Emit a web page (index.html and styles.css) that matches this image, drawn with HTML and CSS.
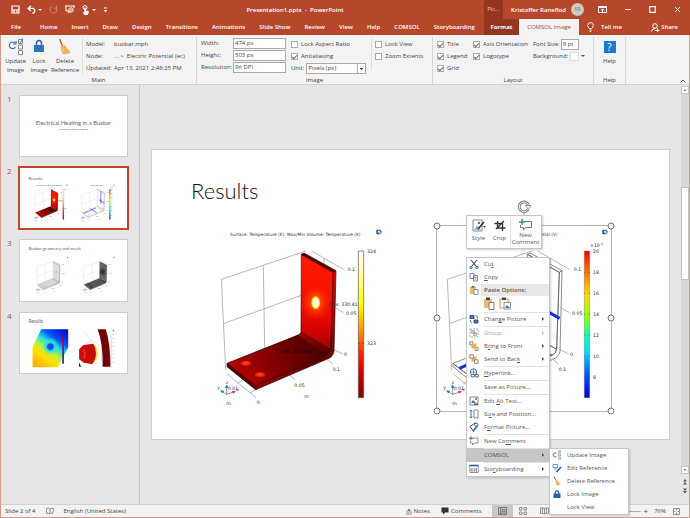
FILE: index.html
```html
<!DOCTYPE html>
<html lang="en">
<head>
    <meta charset="UTF-8">
    <meta name="viewport" content="width=device-width, initial-scale=1.0">
    <title>Presentation1.pptx - PowerPoint</title>
    <link rel="stylesheet" href="styles.css">
</head>
<body>
    <header class="titlebar">
        <div class="quick">
            <button aria-label="Save"><svg width="9" height="9" viewBox="0 0 9 9"><path d="M1 1h7v7H1zM1 5h7M3 5v3M6 5v3" fill="none" stroke="#fff" stroke-width="1.2"/></svg></button>
            <button aria-label="Undo" class="with-caret"><svg width="9" height="9" viewBox="0 0 9 9"><path d="M4 .8 1.2 3.4 4 6M1.5 3.4h4q2.3.3 2.3 2.3T5.4 8.2" fill="none" stroke="#fff" stroke-width="1.4"/></svg><i class="caret"></i></button>
            <button aria-label="Redo" class="off"><svg width="9" height="9" viewBox="0 0 9 9"><path d="M3 1.5a3.4 3.4 0 1 0 4 1M7.5.5v2.7H5" fill="none" stroke="#d7866f" stroke-width="1"/></svg></button>
            <button aria-label="From beginning"><svg width="10" height="9" viewBox="0 0 10 9"><path d="M0 1h10M1 1v5h3M9 1v2M3 8.500l2-2.500" fill="none" stroke="#fff"/><circle cx="6" cy="5" r="2.200" fill="none" stroke="#fff"/><path d="M5.500 4v2l2-1z" fill="#fff"/></svg></button>
            <button aria-label="Touch mode" class="with-caret"><svg width="8" height="10" viewBox="0 0 8 10"><circle cx="3" cy="2.500" r="2" fill="none" stroke="#fff"/><path d="M2.300 2.500h1.400v2.800l3 .7v2L5.500 10h-3L.5 7l1.800.3z" fill="#fff"/></svg><i class="caret"></i></button>
            <button aria-label="Customize"><svg width="5" height="6" viewBox="0 0 5 6"><path d="M1 1h3" stroke="#fff"/><path d="M.5 3h4l-2 2.200z" fill="#fff"/></svg></button>
        </div>
        <div class="doc-title">Presentation1.pptx&nbsp; -&nbsp; PowerPoint</div>
        <div class="account">
            <span class="context-head">Pic...</span>
            <span class="user">Kristoffer Raneflod</span>
            <span class="avatar">KR</span>
            <div class="window-buttons">
                <button aria-label="Ribbon display"><svg width="9" height="7" viewBox="0 0 9 7"><path d="M.5.500h8v6h-8z" fill="none" stroke="#fff"/><path d="M.5 1.500h8M4.500 6V3M3 4.400l1.500-1.500L6 4.400" fill="none" stroke="#fff"/></svg></button>
                <button aria-label="Minimize"><svg width="7" height="7" viewBox="0 0 7 7"><path d="M0 3.500h6" stroke="#fff"/></svg></button>
                <button aria-label="Maximize"><svg width="7" height="7" viewBox="0 0 7 7"><path d="M.7.700h5.600v5.600H.7z" fill="none" stroke="#fff" stroke-width="1.200"/></svg></button>
                <button aria-label="Close"><svg width="7" height="7" viewBox="0 0 7 7"><path d="m1 1 5 5M6 1 1 6" stroke="#fff"/></svg></button>
            </div>
        </div>
    </header>

    <div class="tabbar">
        <nav class="tabs">
            <a href="#">File</a>
            <a href="#">Home</a>
            <a href="#">Insert</a>
            <a href="#">Draw</a>
            <a href="#">Design</a>
            <a href="#">Transitions</a>
            <a href="#">Animations</a>
            <a href="#">Slide Show</a>
            <a href="#">Review</a>
            <a href="#">View</a>
            <a href="#">Help</a>
            <a href="#">COMSOL</a>
            <a href="#">Storyboarding</a>
        </nav>
        <div class="tabs-right">
            <a href="#" class="tab-context">Format</a>
            <a href="#" class="tab-active">COMSOL Image</a>
            <a href="#" class="tell"><svg width="7" height="10" viewBox="0 0 7 10"><path d="M2.300 6.500Q.7 5 .7 3.400a2.800 2.800 0 0 1 5.600 0Q6.300 5 4.700 6.500zM2.300 8h2.400M2.700 9.400h1.600" fill="none" stroke="#fff" stroke-width=".9"/></svg>Tell me</a>
            <a href="#" class="share"><svg width="9" height="9" viewBox="0 0 9 9"><circle cx="4" cy="3" r="2.300" fill="none" stroke="#fff"/><path d="M.5 8.500Q1 5.500 4 5.500M4 7.500h4.500M6.500 5.500v3.500" fill="none" stroke="#fff"/></svg>Share</a>
        </div>
    </div>

    <div class="frame">
        <section class="ribbon">
            <div class="group">
                <div class="group-body">
                    <button class="big update"><svg width="16" height="17" viewBox="0 0 16 17"><path d="M7 5A3.300 3.300 0 1 0 7.500 9M8 3v3H5" fill="none" stroke="#3a78b8" stroke-width="1.200"/><path d="M10.500 1.500h4v4h-4zM10.500 7h4v4h-4zM10.500 12.500h4v4h-4z" fill="#fff" stroke="#888"/><path d="m11.500 3.500 1 1 2.500-4" fill="none" stroke="#3a78b8"/></svg>Update<br>Image</button>
                    <button class="big lock"><svg width="12" height="17" viewBox="0 0 12 17"><path d="M3.500 8V5.500a2.500 3 0 0 1 5 0V8" fill="none" stroke="#2d62a0" stroke-width="1.500"/><path d="M1 7h10v7H1z" fill="#2f75b5"/></svg>Lock<br>Image</button>
                    <button class="big delete"><svg width="14" height="17" viewBox="0 0 14 17"><path d="m1.500 1 3 7" stroke="#a56a35" stroke-width="1.400"/><path d="m3 8.500 3-1.500 6 7q-4 3-7 1.500-2-3-2-7z" fill="#f5bf6c" stroke="#d99a45" stroke-width=".6"/><path d="m5 9 3 6M6 8.500l4 6" stroke="#d99a45" stroke-width=".6"/></svg>Delete<br>Reference</button>
                    <dl class="info">
                        <dt>Model:</dt><dd>busbar.mph</dd>
                        <dt>Node:</dt><dd>... &gt;&nbsp; Electric Potential (ec)</dd>
                        <dt>Updated:</dt><dd class="date">Apr 13, 2021 2:48:25 PM</dd>
                    </dl>
                </div>
                <h2>Main</h2>
            </div>
            <div class="group">
                <div class="group-body">
                    <div class="sizes">
                        <label for="w">Width:</label><input type="text" id="w" value="474 px">
                        <label for="h">Height:</label><input type="text" id="h" value="503 px">
                        <label for="r">Resolution:</label><input type="text" id="r" value="96 DPI">
                    </div>
                    <div class="rows ratio">
                        <label><input type="checkbox">Lock Aspect Ratio</label>
                        <label><input type="checkbox" checked>Antialiasing</label>
                        <label class="unit">Unit:<select><option>Pixels (px)</option></select></label>
                    </div>
                    <div class="rows views">
                        <label><input type="checkbox">Lock View</label>
                        <label><input type="checkbox">Zoom Extents</label>
                    </div>
                </div>
                <h2>Image</h2>
            </div>
            <div class="group">
                <div class="group-body">
                    <div class="rows titles">
                        <label><input type="checkbox" checked>Title</label>
                        <label><input type="checkbox" checked>Legend</label>
                        <label><input type="checkbox" checked>Grid</label>
                    </div>
                    <div class="rows orient">
                        <label><input type="checkbox" checked>Axis Orientation</label>
                        <label><input type="checkbox" checked>Logotype</label>
                    </div>
                    <div class="rows fonts">
                        <label>Font Size:<input type="text" value="9 pt"></label>
                        <label>Background:<button class="swatch" aria-label="Background colour"></button><i class="caret dark"></i></label>
                    </div>
                </div>
                <h2>Layout</h2>
            </div>
            <div class="group">
                <div class="group-body">
                    <button class="big help"><span class="help-icon">?</span>Help</button>
                </div>
                <h2>Help</h2>
            </div>
            <button class="collapse" aria-label="Collapse ribbon"><svg width="6" height="4" viewBox="0 0 6 4"><path d="M.5 3.500 3 1l2.500 2.500" fill="none" stroke="#666"/></svg></button>
        </section>

        <div class="work">
            <ol class="thumbs">
                <li>
                    <svg viewBox="-177 -216 1557 876">
                        <text x="601" y="202" class="thumb-title big-title">Electrical Heating in a Busbar</text>
                        <text x="601" y="286" class="thumb-sub">Analysis of resistive heating</text>
                    </svg>
                </li>
                <li class="current">
                    <svg viewBox="-177 -216 1557 876">
                        <text x="-54" y="-40" class="thumb-title">Results</text>
                        <use href="#plot-temperature"/>
                        <use href="#plot-potential" x="678"/>
                    </svg>
                </li>
                <li>
                    <svg viewBox="-177 -216 1557 876">
                        <text x="-54" y="-66" class="thumb-title">Busbar geometry and mesh</text>
                        <g class="geometry"><use href="#axes" x="30"/><use href="#bracket" x="30"/></g>
                        <g class="mesh"><use href="#axes" x="708"/><use href="#bracket" x="708"/></g>
                        <g fill="#3465a4"><circle cx="515" cy="35" r="9"/><circle cx="1193" cy="35" r="9"/></g>
                    </svg>
                </li>
                <li>
                    <svg viewBox="58 248 324 182">
                        <defs>
                            <linearGradient id="field" x1=".85" y1="0" x2=".2" y2="1">
                                <stop offset="0" stop-color="#0010c8"/><stop offset=".25" stop-color="#0050ff"/><stop offset=".42" stop-color="#20e0e8"/><stop offset=".58" stop-color="#b8f040"/><stop offset=".75" stop-color="#ffe000"/><stop offset="1" stop-color="#ffb000"/>
                            </linearGradient>
                            <radialGradient id="spot"><stop offset="0" stop-color="#0020a0"/><stop offset=".2" stop-color="#1870ff"/><stop offset=".5" stop-color="#20d8f0"/><stop offset="1" stop-color="#80f080" stop-opacity="0"/></radialGradient>
                            <linearGradient id="bar" x1="0" y1="0" x2="0" y2="1"><stop offset="0" stop-color="#900"/><stop offset=".3" stop-color="#c03"/><stop offset="1" stop-color="#0020c0"/></linearGradient>
                        </defs>
                        <text x="84" y="279" class="small-title">Results</text>
                        <path d="M122 297h82v55l-32 60H96v-62z" fill="url(#field)"/>
                        <circle cx="150" cy="350" r="26" fill="url(#spot)"/>
                        <circle cx="150" cy="350" r="8" fill="none" stroke="#0038b0" stroke-width="3"/>
                        <path d="M186 313h5v89h-5z" fill="url(#bar)"/>
                        <path d="M96 320l20-23M100 400l10-6M255 305l25 38M240 355l35-25 30 20v45l-30 12" fill="none" stroke="#999" stroke-width=".7"/>
                        <path d="M272 341q20-2 22 28-2 32-24 34z" fill="#ffe23a"/>
                        <path d="M237 358l13-13 30-4q8 12 8 30t-12 32l-26-5-13-10z" fill="#c40d0d"/>
                        <path d="M250 358q8 14 2 28" fill="none" stroke="#f42b10" stroke-width="5"/>
                        <path d="M293 297h25q14 45 14 114h-24q2-70-15-114z" fill="#7c0505"/>
                        <path d="M301 300q15 45 13 110M310 299q14 45 13 110" fill="none" stroke="#3f0000" stroke-width="2"/>
                        <path d="M237 397l6 14h-6z" fill="#111"/>
                        <path d="M334 313v90M338 313h6M338 325h6M338 337h6M338 349h6M338 361h6M338 373h6M338 385h6M338 397h6" stroke="#888" stroke-width="1"/>
                        <circle cx="341" cy="301" r="2" fill="#3465a4"/>
                    </svg>
                </li>
            </ol>

            <main class="stage">
                <article class="slide">
                    <h1>Results</h1>
                    <div class="plots">
                        <figure>
                            <svg viewBox="3 18 522 555">
                                <defs>
                                    <linearGradient id="wall" x1=".5" y1="0" x2=".5" y2="1"><stop offset="0" stop-color="#ff1a00"/><stop offset=".55" stop-color="#f51000"/><stop offset=".85" stop-color="#c80000"/><stop offset="1" stop-color="#9a0000"/></linearGradient>
                                    <linearGradient id="floor" x1="0" y1=".6" x2="1" y2=".3"><stop offset="0" stop-color="#bd0000"/><stop offset=".4" stop-color="#860000"/><stop offset="1" stop-color="#4a0000"/></linearGradient>
                                    <linearGradient id="edge" x1="0" y1="1" x2="1" y2="0"><stop offset="0" stop-color="#9c0000"/><stop offset=".5" stop-color="#560000"/><stop offset="1" stop-color="#d80b00"/></linearGradient>
                                    <linearGradient id="bend" x1="0" y1="0" x2="0" y2="1"><stop offset="0" stop-color="#a80000"/><stop offset="1" stop-color="#470000"/></linearGradient>
                                    <radialGradient id="glow"><stop offset="0" stop-color="#ff8c00"/><stop offset=".4" stop-color="#ff5000" stop-opacity=".8"/><stop offset="1" stop-color="#ff2000" stop-opacity="0"/></radialGradient>
                                    <radialGradient id="bolt"><stop offset="0" stop-color="#ff4a1c"/><stop offset="1" stop-color="#d81000"/></radialGradient>
                                    <linearGradient id="thermal" x1="0" y1="0" x2="0" y2="1"><stop offset="0" stop-color="#fff"/><stop offset=".15" stop-color="#ffffa0"/><stop offset=".36" stop-color="#ff0"/><stop offset=".55" stop-color="#ff9000"/><stop offset=".7" stop-color="#ff2000"/><stop offset=".82" stop-color="#d80000"/><stop offset="1" stop-color="#780000"/></linearGradient>
                                    <linearGradient id="rainbow" x1="0" y1="0" x2="0" y2="1"><stop offset="0" stop-color="#f00"/><stop offset=".12" stop-color="#ff6000"/><stop offset=".3" stop-color="#ffd800"/><stop offset=".45" stop-color="#90ff00"/><stop offset=".55" stop-color="#20ff90"/><stop offset=".68" stop-color="#00e0ff"/><stop offset=".85" stop-color="#0050ff"/><stop offset="1" stop-color="#0000d8"/></linearGradient>
                                </defs>
                                <g id="plot-temperature" class="heat">
                                    <text x="60" y="47" class="caption">Surface: Temperature (K)&nbsp; Max/Min Volume: Temperature (K)</text>
                                    <g id="logo"><path d="M499 29h12q4 2 4 7t-5 7h-11z" fill="#2c5aa8"/><path d="M504 32h6v6h-6z" fill="#f7e463"/><path d="M508 35h6v6h-6z" fill="#9cc8f0"/></g>
                                    <g id="axes">
                                        <path d="M47 450 34 178 288 93M160 136l4 249M40 311l234-85M305 93l95 55M342 114v20M378 265l22 13M370 388l28 14M52 462l86 71M102 478l-20 12M235 462l20 17M350 418l18 14M120 520l17-12" fill="none" stroke="#aaa" stroke-width="2.500"/>
                                        <g class="ticks">
                                            <text x="413" y="154">0.1</text><text x="408" y="285">0.05</text><text x="402" y="408">0</text>
                                            <text x="368" y="452">0.1</text><text x="253" y="501">0.05</text><text x="283" y="535">m</text>
                                            <text x="140" y="553">0</text><text x="49" y="554">m</text><text x="53" y="511">0.01</text>
                                            <text x="47" y="491">z</text><text x="22" y="508">y</text><text x="79" y="513">x</text>
                                        </g>
                                        <path d="M50 523v-22M46 503l4-8 4 8z" fill="#2b6fc0" stroke="#2b6fc0" stroke-width="2"/>
                                        <path d="m50 523-12-7m-6-4 9 1-4 6z" fill="#1b9a30" stroke="#1b9a30" stroke-width="2"/>
                                        <path d="m50 523 18-6m8-3-9 0 3 6z" fill="#d81550" stroke="#d81550" stroke-width="2"/>
                                    </g>
                                    <g id="bracket">
                                        <path class="face-floor" d="M51 430 262 346l86 60-211 91z"/>
                                        <path class="face-bend" d="M273 337q-3 7-11 9l86 60q12-4 14-18z"/>
                                        <path class="face-wall" d="M274 103l96 54-8 231-89-51z"/>
                                        <path class="face-edge" d="M274 103l8-4 96 53-8 5z"/>
                                        <path class="face-edge" d="M370 157l8-5-6 243q-4 17-22 23L137 509v-12l211-91q12-4 14-18z"/>
                                        <path class="face-edge" d="M51 430l86 67v12l-86-69z"/>
                                        <ellipse class="halo" cx="317" cy="248" rx="42" ry="52"/>
                                        <ellipse class="hole" cx="317" cy="248" rx="11" ry="17"/>
                                        <ellipse class="bolt" cx="107" cy="430" rx="17" ry="9"/>
                                        <ellipse class="bolt" cx="150" cy="464" rx="17" ry="9"/>
                                    </g>
                                    <g class="ticks">
                                        <text x="354" y="259">max: 330.415</text>
                                        <text x="213" y="398" class="min">min: 322.415</text>
                                        <text x="471" y="98">324</text><text x="471" y="375">323</text>
                                    </g>
                                    <path d="M445 93h16v440h-16z" fill="url(#thermal)" stroke="#555" stroke-width="2"/>
                                    <path d="M445 370h4m8 0h4" stroke="#333" stroke-width="2"/>
                                </g>
                            </svg>
                        </figure>
                        <figure class="selected">
                            <svg viewBox="3 18 522 555">
                                <g id="plot-potential">
                                    <text x="365" y="47" text-anchor="end" class="caption">Multislice: Electric potential (V)</text>
                                    <use href="#logo"/>
                                    <use href="#axes"/>
                                    <g class="outline"><use href="#bracket"/></g>
                                    <path d="M70 445 250 365M170 375l90 60M322 120v190M300 255l71 40" fill="none" stroke="#1030e0" stroke-width="9"/>
                                    <path d="M445 93h16v440h-16z" fill="url(#rainbow)" stroke="#555" stroke-width="1"/>
                                    <g class="ticks">
                                        <text x="462" y="82">×10<tspan dy="-6" font-size="9">-3</tspan></text>
                                        <text x="471" y="98">20</text><text x="471" y="162">18</text><text x="471" y="225">16</text><text x="471" y="288">14</text><text x="471" y="350">12</text><text x="471" y="414">10</text><text x="471" y="477">8</text>
                                    </g>
                                    <path d="M445 157h16M445 220h16M445 283h16M445 345h16M445 409h16M445 472h16" stroke="#333" stroke-width="1.500" stroke-dasharray="3 10"/>
                                </g>
                            </svg>
                            <i class="handle nw"></i><i class="handle ne"></i><i class="handle w"></i><i class="handle e"></i><i class="handle sw"></i><i class="handle s"></i><i class="handle se"></i>
                            <svg class="rotate" width="14" height="20" viewBox="0 0 14 20"><path d="M7 13v7" stroke="#999"/><path d="M11 9.500A4.800 4.800 0 1 1 11.500 5" fill="none" stroke="#777" stroke-width="2.800"/><path d="M11 9.500A4.800 4.800 0 1 1 11.500 5" fill="none" stroke="#fff" stroke-width="1"/><path d="M8.500 5.500h5.500l-2.500 4z" fill="#fff" stroke="#777" stroke-width=".8"/></svg>

                            <div class="mini">
                                <button><svg width="14" height="13" viewBox="0 0 14 13"><path d="M1 1h9v11H1z" fill="#fff" stroke="#888"/><path d="m2 11 3-5 4 5z" fill="#8fb6dc"/><circle cx="7" cy="4" r="1.200" fill="#3a78b8"/><path d="m6 10 6-7" stroke="#333" stroke-width="1.600"/><path d="M11 7h3l-1.500 2z" fill="#444"/></svg>Style</button>
                                <button><svg width="12" height="13" viewBox="0 0 12 13"><path d="M3.500 2v7h8M.5 4.500h8V12M2 10l8-8" fill="none" stroke="#333" stroke-width="1.300"/></svg>Crop</button>
                                <button class="new-comment"><svg width="13" height="13" viewBox="0 0 13 13"><path d="M5 2.500h7.500v6h-6l-2 2.500V8.500h-3V6" fill="none" stroke="#777"/><path d="M3 0v6M0 3h6" stroke="#3d9970" stroke-width="1.500"/></svg>New<br>Comment</button>
                            </div>

                            <ul class="menu">
                                <li><svg viewBox="0 0 10 10"><path d="m2 1 5 6M8 1 3 7" stroke="#444" stroke-width="1.100"/><path d="M1 7.500h2v1.800H1zM7 7.500h2v1.800H7z" fill="none" stroke="#3a78b8"/></svg><button>Cu<u>t</u></button></li>
                                <li><svg viewBox="0 0 10 10"><path d="M1 1.500h4v5H1zM4.500 3.500h4v5.500h-4z" fill="#fff" stroke="#7d8894"/><path d="M5.500 5.500h2M5.500 7h2" stroke="#3a78b8" stroke-width=".7"/></svg><button><u>C</u>opy</button></li>
                                <li class="head"><svg viewBox="0 0 10 10"><path d="M1 2h6v7H1z" fill="#e8b878"/><path d="M2.500 1h3v1.600h-3z" fill="#666"/><path d="M5 4.500h4v5H5z" fill="#fff" stroke="#777" stroke-width=".8"/></svg><span>Paste Options:</span></li>
                                <li class="paste">
                                    <button aria-label="Use destination theme"><svg viewBox="0 0 12 13"><path d="M1 2h8v9H1z" fill="#e8b878"/><path d="M3 .5h4V3H3z" fill="#444"/><path d="M6 5.500h5v7H6z" fill="#fff" stroke="#666" stroke-width=".8"/></svg></button>
                                    <button aria-label="Picture"><svg viewBox="0 0 12 13"><path d="M1 2h8v9H1z" fill="#fff" stroke="#e0a35a" stroke-width="1.200"/><path d="M3 .5h4V3H3z" fill="#444"/><path d="M5 5.500h6.500v6.500H5z" fill="#fff" stroke="#777" stroke-width=".8"/><path d="m6 11 2-3 3 3z" fill="#3a78b8"/></svg></button>
                                </li>
                                <li class="sep"><svg viewBox="0 0 10 10"><path d="M1 1.500h4v3H1zM5 6h4v3H5z" fill="#4a87bd" stroke="#234" stroke-width=".8"/><path d="M6.500 1.500q2.500 0 2 3M3 9Q1 8.500 1.500 6" fill="none" stroke="#3d9970"/></svg><button>Chan<u>g</u>e Picture</button><i class="more"></i></li>
                                <li class="sep disabled"><svg viewBox="0 0 10 10"><path d="M1 1h8v8H1z" fill="none" stroke="#aaa" stroke-dasharray="2 1"/><path d="M2.500 2.500h3v3h-3zM4.500 4.500h3v3h-3z" fill="#ccc" stroke="#999" stroke-width=".6"/></svg><button>Group</button><i class="more"></i></li>
                                <li><svg viewBox="0 0 10 10"><path d="M.8.800h3v3h-3zM6 6.500h3v2.800H6z" fill="#fff" stroke="#888"/><path d="M2.500 2.500h5v5h-5z" fill="#f0ae4c"/></svg><button>B<u>r</u>ing to Front</button><i class="more split"></i></li>
                                <li><svg viewBox="0 0 10 10"><path d="M2.500 2.500h5v5h-5z" fill="#f0ae4c"/><path d="M.8.800h3.500v3.500H.8zM5.500 5.800h3.500v3.500H5.500z" fill="#fff" stroke="#888"/></svg><button>Send to Bac<u>k</u></button><i class="more split"></i></li>
                                <li class="sep"><svg viewBox="0 0 10 10"><circle cx="4.500" cy="4" r="3.200" fill="#fff" stroke="#47708f"/><path d="M1.500 4h6M4.500 1v6" stroke="#47708f" stroke-width=".7"/><rect x="2" y="6.500" width="3.500" height="2.500" rx="1.200" fill="#fff" stroke="#245b92"/><rect x="6" y="6.500" width="3.500" height="2.500" rx="1.200" fill="#fff" stroke="#245b92"/></svg><button><u>H</u>yperlink...</button></li>
                                <li class="sep"><button>Save as Picture...</button></li>
                                <li class="sep"><svg viewBox="0 0 10 10"><path d="M1 1h8v8H1z" fill="#fff" stroke="#7d8894"/><path d="m2 7 2-3 3 3z" fill="#3a78b8"/><path d="M5 8h4M6 3h2" stroke="#222" stroke-width="1.200"/></svg><button>Edit <u>A</u>lt Text...</button></li>
                                <li><svg viewBox="0 0 10 10"><path d="M2 1v8M.8 2.500 2 1l1.200 1.500M.8 7.500 2 9l1.200-1.500" fill="none" stroke="#3a78b8"/><path d="M5 1h4v8H5z" fill="#fff" stroke="#888"/></svg><button>Si<u>z</u>e and Position...</button></li>
                                <li><svg viewBox="0 0 10 10"><path d="M1 4.500 4.500 2l3 3L4 8.500z" fill="#fff" stroke="#444"/><path d="m4 9.500 5-6.500" stroke="#3a78b8" stroke-width="1.800"/><path d="M5 1.500Q8 0 9 2.500" fill="none" stroke="#333"/></svg><button>F<u>o</u>rmat Picture...</button></li>
                                <li class="sep"><svg viewBox="0 0 10 10"><path d="M4 2h5v5H5L3.500 9V7h-2V5" fill="none" stroke="#888" stroke-width=".9"/><path d="M2 .3v4M0 2.300h4" stroke="#3d9970" stroke-width="1.200"/></svg><button>New Co<u>m</u>ment</button></li>
                                <li class="sep open"><button>COMSOL</button><i class="more"></i>
                                    <ul class="menu submenu">
                                        <li><svg viewBox="0 0 10 10"><path d="M4.500 3.500a2 2 0 1 0 0 3" fill="none" stroke="#3a78b8"/><path d="M6.500.700h2v2h-2zM6.500 4h2v2h-2zM6.500 7.300h2v2h-2z" fill="#fff" stroke="#999" stroke-width=".8"/></svg><button>Update Image</button></li>
                                        <li><svg viewBox="0 0 10 10"><path d="M1 1.500h4.500v3H1zM2 6h3" fill="#fff" stroke="#6f97bb"/><path d="m4.500 9 4.500-5" stroke="#2464a4" stroke-width="1.800"/></svg><button>Edit Reference</button></li>
                                        <li><svg viewBox="0 0 10 10"><path d="m2 .5 2 4" stroke="#a56a35"/><path d="m3 5 2-1 3.500 4Q7 10 4.500 9.500z" fill="#f3b962"/></svg><button>Delete Reference</button></li>
                                        <li><svg viewBox="0 0 10 10"><path d="M3.300 5V3.500a1.700 1.700 0 0 1 3.400 0V5" fill="none" stroke="#245b92" stroke-width="1.200"/><path d="M1.500 4.500h7V9h-7z" fill="#2464a4"/></svg><button>Lock Image</button></li>
                                        <li><button>Lock View</button></li>
                                    </ul>
                                </li>
                                <li class="sep"><svg viewBox="0 0 10 10"><path d="M.8 1.500h8.400v7H.8zM2 5h4v2H2zM7.500 4v4" fill="#fff" stroke="#777" stroke-width=".8"/><path d="M.5 1.500h9" stroke="#2464a4" stroke-width="1.600"/></svg><button>Sto<u>r</u>yboarding</button><i class="more"></i></li>
                            </ul>
                        </figure>
                    </div>
                </article>
            </main>

            <div class="scroll">
                <button aria-label="Scroll up"><i class="up"></i></button>
                <div class="track"><div class="grip"></div></div>
                <button aria-label="Scroll down"><i class="down"></i></button>
                <svg width="6" height="16" viewBox="0 0 6 16"><path d="M1 3.500 3 1l2 2.500zM1 6.500 3 4l2 2.500zM1 10.500l2 2.500 2-2.500zM1 13l2 2.500L5 13z" fill="#555"/></svg>
            </div>
        </div>

        <footer class="status">
            <span>Slide 2 of 4</span>
            <svg class="book" width="8" height="8" viewBox="0 0 8 8"><path d="M4 2Q2 .5.5 1.500v5Q2 5.500 4 7V2q1-1 3.500-.5v2M5 6l1 1 1.500-3" fill="none" stroke="#777" stroke-width=".8"/></svg>
            <span class="lang">English (United States)</span>
            <button class="notes"><svg width="6" height="7" viewBox="0 0 6 7"><path d="M0 4h6M0 6h6" stroke="#777" stroke-width=".8"/><path d="m3 .5 2 2.500H1z" fill="#777"/></svg>Notes</button>
            <button class="comments"><svg width="8" height="8" viewBox="0 0 8 8"><path d="M.5.500h7v5H4L2 7.800V5.500H.5z" fill="#333"/></svg>Comments</button>
            <div class="views-bar">
                <button class="on" aria-label="Normal"><svg width="9" height="8" viewBox="0 0 9 8"><path d="M.5.500h8v7h-8zM2.500.500v7M4 2.500h3v2H4zM2.500 6h6" fill="none" stroke="#666" stroke-width=".8"/></svg></button>
                <button aria-label="Slide sorter"><svg width="8" height="8" viewBox="0 0 8 8"><path d="M.5.500h2.500v2.500H.5zM5 .500h2.500v2.500H5zM.5 5h2.500v2.500H.5zM5 5h2.500v2.500H5z" fill="none" stroke="#777" stroke-width=".8"/></svg></button>
                <button aria-label="Reading view"><svg width="9" height="8" viewBox="0 0 9 8"><path d="M4.500 1.500Q2.500.500.5 1v5.500q2-.500 4 .5 2-1 4-.5V1q-2-.5-4 .5V7M2.500 1v5.500M6.500 1v5.500" fill="none" stroke="#777" stroke-width=".8"/></svg></button>
            </div>
            <input type="range" aria-label="Zoom" min="10" max="400" value="76">
            <span class="plus">+</span>
            <span class="zoom">76%</span>
            <svg class="fit" width="7" height="7" viewBox="0 0 7 7"><path d="M.5.500h6v6h-6z" fill="none" stroke="#777" stroke-width=".8"/><path d="M3.500 1v5M1 3.500h5" stroke="#999" stroke-dasharray="1.500 2"/></svg>
        </footer>
    </div>
</body>
</html>
```
FILE: styles.css
```css
* {
    box-sizing: border-box;
}

body {
    margin: 0;
    min-height: 100vh;
    display: flex;
    flex-direction: column;
    background: #e6e6e6;
    font-family: "Open Sans", "Noto Sans", sans-serif;
    font-size: 6px;
    line-height: 8px;
    color: #444;
}

button, input, select {
    font: inherit;
    color: inherit;
    margin: 0;
    padding: 0;
    border: none;
    background: none;
}

a {
    color: inherit;
    text-decoration: none;
}

svg {
    display: block;
    flex: none;
}

ul, ol, dl, dd, h1, h2, figure {
    margin: 0;
    padding: 0;
    list-style: none;
}

/* title bar */
.titlebar {
    display: flex;
    align-items: center;
    height: 19px;
    background: #b7472a;
    color: #fff;
    font-weight: 600;
}

.quick {
    display: flex;
    align-items: center;
    gap: 7px;
    width: 106px;
    padding-left: 11px;
}

.with-caret {
    display: flex;
    align-items: center;
    gap: 2px;
}

.caret {
    border: 2px solid transparent;
    border-top-color: #fff;
    border-bottom: none;
}

.caret.dark {
    border-top-color: #555;
    margin-left: 2px;
}

.doc-title {
    flex: 1;
    text-align: center;
}

.account, .tabs-right {
    display: flex;
    align-items: center;
    width: 206px;
    height: 100%;
}

.context-head {
    width: 19px;
    height: 100%;
    padding-top: 5px;
    text-align: center;
    background: #94371f;
    font-weight: 400;
    color: #e8c4ba;
}

.user {
    width: 66px;
    padding-left: 5px;
    text-align: center;
    white-space: nowrap;
}

.avatar {
    width: 13px;
    height: 13px;
    margin-left: 2px;
    border-radius: 50%;
    background: #cfc8c4;
    color: #8b7f7a;
    font-size: 5px;
    font-weight: 400;
    line-height: 13px;
    text-align: center;
}

.window-buttons {
    flex: 1;
    display: flex;
    justify-content: space-between;
    padding: 0 9px 0 14px;
}

/* tabs */
.tabbar {
    display: flex;
    height: 16px;
    background: #b7472a;
    color: #fff;
    font-weight: 600;
}

.tabs {
    flex: 1;
    display: flex;
    align-items: center;
    justify-content: space-between;
    padding: 0 9px 0 11px;
}

.tabs a:first-child {
    margin-right: 5px;
}

.tab-context, .tab-active {
    height: 100%;
    line-height: 16px;
    text-align: center;
}

.tab-context {
    width: 35px;
    background: #94371f;
    font-weight: 700;
}

.tab-active {
    width: 60px;
    background: #f3f3f3;
    color: #b7472a;
    font-weight: 400;
}

.tell, .share {
    display: flex;
    align-items: center;
    gap: 7px;
    margin-left: 8px;
}

.share {
    gap: 1px;
    margin-left: auto;
    padding-right: 12px;
}

.frame {
    flex: 1;
    display: flex;
    flex-direction: column;
    border: 1px solid #d99a8c;
    border-top: none;
}

/* ribbon */
.ribbon {
    display: flex;
    position: relative;
    height: 50px;
    background: #f3f3f3;
    border-bottom: 1px solid #d2d2d2;
}

.group {
    display: flex;
    flex-direction: column;
    margin-top: 2px;
    border-right: 1px solid #d5d5d5;
}

.group-body {
    flex: 1;
    display: flex;
    padding-top: 1px;
}

.group h2 {
    font-size: 6px;
    line-height: 8px;
    font-weight: 400;
    text-align: center;
}

.big {
    display: flex;
    flex-direction: column;
    align-items: center;
    gap: 2px;
    line-height: 9px;
    text-align: center;
}

.update {
    width: 29px;
}

.lock {
    width: 18px;
}

.delete {
    width: 34px;
}

.info {
    display: grid;
    grid-template-columns: 28px 1fr;
    grid-auto-rows: 12px;
    line-height: 12px;
    width: 114px;
    height: 36px;
    padding-left: 3px;
    border-left: 1px solid #ddd;
    white-space: nowrap;
}

.sizes {
    display: grid;
    grid-template-columns: 32px 53px;
    grid-auto-rows: 11px;
    row-gap: 1px;
    line-height: 11px;
    padding-left: 4px;
}

input[type="text"], select {
    height: 11px;
    padding: 0 1px;
    border: 1px solid #ababab;
    background: #fff;
}

.rows label {
    display: flex;
    align-items: center;
    height: 12px;
    white-space: nowrap;
}

input[type="checkbox"] {
    appearance: none;
    display: grid;
    place-items: center;
    width: 7px;
    height: 7px;
    margin-right: 3px;
    border: 1px solid #ababab;
    background: #fff;
}

input[type="checkbox"]:checked::before {
    content: "";
    width: 4px;
    height: 2px;
    border: 1px solid #666;
    border-top: none;
    border-right: none;
    rotate: -45deg;
}

.ratio {
    width: 80px;
    margin-left: 5px;
}

select {
    appearance: none;
    flex: 1;
    margin-left: 2px;
    background: linear-gradient(#ababab, #ababab) right 7px top / 1px 100% no-repeat, conic-gradient(from -45deg at 50% 75%, #444 90deg, transparent 0) right 2px top 4px / 3px 3px no-repeat, #fff;
}

.unit {
    margin-right: 5px;
}

.views {
    width: 61px;
    height: 32px;
    padding-left: 3px;
    border-left: 1px solid #ddd;
}

.titles {
    width: 40px;
    padding-left: 4px;
}

.orient {
    width: 60px;
}

.fonts {
    width: 60px;
}

.fonts input {
    width: 18px;
    margin-left: 1px;
}

.swatch {
    width: 9px;
    height: 9px;
    margin-left: 2px;
    border: 1px solid #ddd;
    background: #fff;
}

.help {
    width: 31px;
    padding-top: 3px;
    gap: 4px;
}

.help-icon {
    width: 12px;
    height: 12px;
    background: #1979ca;
    color: #fff;
    font-size: 10px;
    line-height: 12px;
}

.collapse {
    position: absolute;
    right: 3px;
    bottom: 1px;
}

/* slide list */
.work {
    flex: 1;
    display: flex;
}

.thumbs {
    display: flex;
    flex-direction: column;
    gap: 10px;
    width: 139px;
    padding: 10px 11px 0 6px;
    border-right: 1px solid #c8c8c8;
    counter-reset: slide;
}

.thumbs li {
    display: flex;
    counter-increment: slide;
}

.thumbs li::before {
    content: counter(slide);
    width: 12px;
    font-size: 8px;
    line-height: 8px;
    color: #666;
}

.thumbs svg {
    flex: 1;
    min-width: 0;
    border: 1px solid #ccc;
    background: #fff;
}

.thumbs .current::before {
    color: #d24726;
}

.current svg {
    outline: 1px solid #c0462d;
    border-color: #c0462d;
}

.thumb-title {
    font-size: 64px;
    font-weight: 400;
    font-family: Lato, sans-serif;
    fill: #666;
}

.big-title {
    font-size: 86px;
    text-anchor: middle;
}

.thumb-sub {
    font-size: 34px;
    text-anchor: middle;
    fill: #444;
}

.small-title {
    font: 14px Lato, sans-serif;
    fill: #666;
}

/* slide */
.stage {
    flex: 1;
    display: flex;
    align-items: center;
    padding: 0 10px 0 11px;
}

.slide {
    flex: 1;
    aspect-ratio: 16 / 9;
    background: #fff;
    border: 1px solid #d0d0d0;
}

.slide h1 {
    margin: 27px 0 0 39px;
    font-family: Lato, sans-serif;
    font-size: 22px;
    line-height: 28px;
    font-weight: 300;
    color: #111;
}

.plots {
    display: flex;
    gap: 52px;
    padding: 21px 58px 0 59px;
}

.plots figure {
    flex: 1;
    position: relative;
}

.plots figure > svg:first-child {
    width: 100%;
}

.caption, .ticks {
    font-family: "DejaVu Sans", sans-serif;
    font-size: 14px;
    fill: #333;
}

.caption {
    font-size: 13px;
}

.min {
    fill: #000;
}

#bracket path {
    stroke: var(--line, #2a0000);
    stroke-width: 2;
}

.face-floor { fill: var(--floor, url(#floor)); }
.face-bend { fill: var(--bend, url(#bend)); }
.face-wall { fill: var(--wall, url(#wall)); }
.face-edge { fill: var(--edge, url(#edge)); }
.halo { fill: var(--halo, url(#glow)); }
.hole { fill: var(--hole, #fff); stroke: var(--rim, #ffe000); stroke-width: 4; }
.bolt { fill: var(--bolt, url(#bolt)); stroke: var(--line, #800); stroke-width: 2; }

.geometry {
    --floor: #d8d8d8;
    --bend: #bbb;
    --wall: #dedede;
    --edge: #aaa;
    --halo: none;
    --hole: #ccc;
    --rim: #999;
    --bolt: #ccc;
    --line: #999;
}

.mesh {
    --floor: #555;
    --bend: #333;
    --wall: #666;
    --edge: #444;
    --halo: #444;
    --hole: #222;
    --rim: #222;
    --bolt: #333;
    --line: #222;
}

.outline {
    --floor: none;
    --bend: none;
    --wall: none;
    --edge: none;
    --halo: none;
    --hole: none;
    --rim: #777;
    --bolt: none;
    --line: #555;
}

/* selection frame */
.selected {
    outline: 1px solid #b5b5b5;
}

.handle {
    position: absolute;
    width: 7px;
    height: 7px;
    border: 1px solid #777;
    border-radius: 50%;
    background: #fff;
    translate: -50% -50%;
}

.nw { left: 0; top: 0; }
.ne { left: 100%; top: 0; }
.w { left: 0; top: 50%; }
.e { left: 100%; top: 50%; }
.sw { left: 0; top: 100%; }
.s { left: 50%; top: 100%; }
.se { left: 100%; top: 100%; }

.rotate {
    position: absolute;
    left: 50%;
    top: -26px;
    translate: -50% 0;
}

/* floating toolbar and menus */
.mini, .menu {
    position: absolute;
    left: 29px;
    background: #fff;
    border: 1px solid #c6c6c6;
    box-shadow: 1px 1px 2px rgba(0, 0, 0, .2);
    color: #555;
}

.mini {
    top: -11px;
    display: flex;
    width: 76px;
    height: 34px;
    padding: 3px 1px;
}

.mini button {
    display: flex;
    flex-direction: column;
    align-items: center;
    gap: 3px;
    width: 21px;
    line-height: 7px;
}

.mini .new-comment {
    flex: 1;
    gap: 0;
    border-left: 1px solid #ddd;
}

.menu {
    top: 31px;
    width: 84px;
    z-index: 2;
}

.menu li {
    position: relative;
    display: grid;
    grid-template-columns: 17px 1fr 12px;
    align-items: center;
    height: 13px;
    text-align: left;
    white-space: nowrap;
}

.menu svg {
    width: 10px;
    height: 10px;
    margin-left: 2px;
}

.menu li > button {
    grid-column: 2;
    grid-row: 1;
    text-align: left;
}

.menu .sep {
    height: 14px;
    padding-top: 1px;
}

.menu .sep::before {
    content: "";
    position: absolute;
    top: 0;
    left: 17px;
    right: 0;
    border-top: 1px solid #e1e1e1;
}

.menu .head {
    height: 12px;
    font-weight: 600;
    background: linear-gradient(#e8e8e8, #e8e8e8) 14px 0 no-repeat;
}

.menu .paste {
    display: flex;
    gap: 2px;
    height: 16px;
    padding-left: 14px;
}

.menu .paste svg {
    width: 12px;
    height: 13px;
}

.menu .disabled {
    color: #aaa;
}

.menu .open {
    background: #c6c6c6;
}

.more {
    grid-column: 3;
    grid-row: 1;
    justify-self: center;
    border: 2px solid transparent;
    border-left-color: #444;
    border-right: none;
}

.disabled .more {
    border-left-color: #bbb;
}

.split {
    box-shadow: -5px 0 0 -1px #fff, -6px 0 0 -1px #ddd;
}

.menu .submenu {
    left: 100%;
    top: 0;
    width: 80px;
}

/* scroll bar */
.scroll {
    display: flex;
    flex-direction: column;
    align-items: center;
    width: 9px;
    padding: 1px 0 10px;
}

.scroll button {
    display: grid;
    place-items: center;
    width: 8px;
    height: 8px;
    border: 1px solid #c4c4c4;
    background: #fff;
}

.up, .down {
    border: 1px solid transparent;
    border-bottom: 2px solid #555;
    border-top: none;
}

.down {
    rotate: 180deg;
}

.track {
    flex: 1;
    width: 8px;
    padding-top: 93px;
    background: #d9d9d9;
}

.grip {
    height: 93px;
    border: 1px solid #c0c0c0;
    background: #fff;
}

.scroll svg {
    margin-top: 4px;
}

/* status bar */
.status {
    display: flex;
    align-items: center;
    height: 13px;
    padding: 0 9px 0 4px;
    border-top: 1px solid #d0d0d0;
    background: #f3f3f3;
    white-space: nowrap;
}

.book {
    margin: 0 10px;
}

.lang {
    flex: 1;
}

.status button {
    display: flex;
    align-items: center;
    justify-content: center;
    gap: 2px;
}

.notes {
    margin-right: 11px;
}

.comments {
    margin-right: 10px;
}

.views-bar {
    display: flex;
    align-self: stretch;
}

.views-bar button {
    width: 21px;
}

.views-bar .on {
    background: #c8c8c8;
}

input[type="range"] {
    appearance: none;
    width: 62px;
    height: 1px;
    margin: 0 3px 0 24px;
    background: #aaa;
}

input[type="range"]::-webkit-slider-thumb {
    appearance: none;
    width: 3px;
    height: 7px;
    background: #666;
}

.plus {
    font-size: 8px;
    margin-right: 6px;
}

.fit {
    margin-left: 7px;
}
```
